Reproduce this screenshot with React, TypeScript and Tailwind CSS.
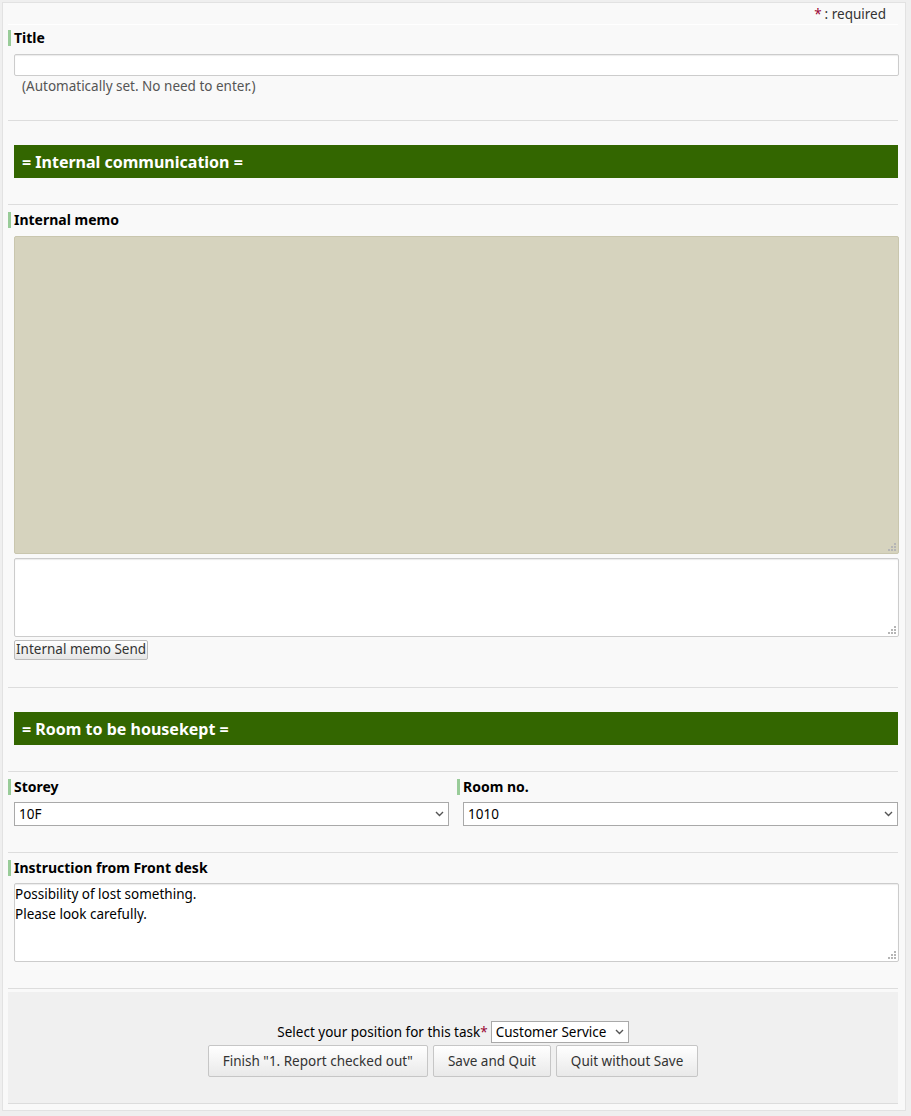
import React from 'react';

const font = { fontFamily: '"Noto Sans", "Liberation Sans", Arial, sans-serif' };

function Label({ children }: { children: React.ReactNode }) {
  return (
    <div className="flex h-[16px] items-center border-l-[3px] border-[#99cc99] pl-[3px] text-[14px] leading-[16px] font-bold text-black">
      {children}
    </div>
  );
}

function Hr() {
  return <div className="h-px bg-[#dddddd]" />;
}

function SectionHead({ children }: { children: React.ReactNode }) {
  return (
    <div className="ml-[6px] flex h-[33px] items-center bg-[#336600] pl-[8px] text-[16px] leading-[20px] font-bold text-white">
      {children}
    </div>
  );
}

function Chevron() {
  return (
    <svg width="9" height="6" viewBox="0 0 9 6" className="pointer-events-none absolute right-[5px] top-1/2 -translate-y-1/2">
      <path d="M1 1 L4.5 4.5 L8 1" fill="none" stroke="#555" strokeWidth="1.4" />
    </svg>
  );
}

// dotted resize grip like the original page's textareas
function Grip() {
  return (
    <svg width="8" height="8" viewBox="0 0 8 8" className="pointer-events-none absolute bottom-[3px] right-[3px]">
      <rect x="6" y="0" width="2" height="2" fill="#b5b5b5" />
      <rect x="3" y="3" width="2" height="2" fill="#b5b5b5" />
      <rect x="6" y="3" width="2" height="2" fill="#b5b5b5" />
      <rect x="0" y="6" width="2" height="2" fill="#b5b5b5" />
      <rect x="3" y="6" width="2" height="2" fill="#b5b5b5" />
      <rect x="6" y="6" width="2" height="2" fill="#b5b5b5" />
    </svg>
  );
}

function Area({ className, area, value }: { className: string; area: string; value?: string }) {
  return (
    <div className={`relative ml-[6px] w-[885px] ${className}`}>
      <textarea
        defaultValue={value}
        className={`block h-full w-full resize-none rounded-[2px] border px-0 py-0 text-[13.5px] leading-[20px] text-black ${area}`}
      />
      <Grip />
    </div>
  );
}

function Select({ value, className }: { value: string; className: string }) {
  return (
    <div className={`relative ${className}`}>
      <select
        defaultValue={value}
        className="h-full w-full appearance-none border border-[#a9a9a9] bg-white pl-[4px] text-[13.5px] leading-[16px] text-black outline-none"
      >
        <option>{value}</option>
      </select>
      <Chevron />
    </div>
  );
}

const btn =
  'h-[32px] rounded-[2px] border border-[#c6c6c6] bg-gradient-to-b from-[#ffffff] to-[#e9e9e9] px-[14px] text-[13.5px] leading-[16px] text-[#333]';

const whiteArea = 'border-[#cccccc] bg-white shadow-[inset_0_1px_1px_rgba(0,0,0,0.08)]';

export default function App() {
  return (
    <div className="min-h-screen bg-[#efefef] pb-[4px] pl-[2px] pr-[5px] pt-[2px] leading-[16px]" style={font}>
      <div className="border border-[#e2e2e2] bg-[#f9f9f9] pb-[6px] pl-[5px] pr-[7px]">
        <div className="flex h-[22px] items-center justify-end border-b border-white pr-[12px] text-[13.5px] text-[#333]">
          <span className="mr-[3px] text-[#990033]">*</span>: required
        </div>

        <div className="pt-[5px]">
          <Label>Title</Label>
          <input className="ml-[6px] mt-[8px] block h-[22px] w-[885px] rounded-[2px] border border-[#cccccc] bg-white shadow-[inset_0_1px_1px_rgba(0,0,0,0.08)]" />
          <div className="ml-[14px] mt-[2px] text-[13.5px] leading-[16px] text-[#555]">(Automatically set. No need to enter.)</div>
        </div>
        <div className="h-[26px]" />
        <Hr />

        <div className="pb-[26px] pt-[24px]">
          <SectionHead>= Internal communication =</SectionHead>
        </div>
        <Hr />

        <div className="pt-[7px]">
          <Label>Internal memo</Label>
          <Area className="mt-[8px] h-[318px]" area="border-[#c9c6ae] bg-[#d6d3be]" />
          <Area className="mt-[4px] h-[79px]" area={whiteArea} />
          <button className="ml-[6px] mt-[3px] block h-[20px] rounded-[2px] border border-[#bbbbbb] bg-gradient-to-b from-[#ffffff] to-[#e6e6e6] px-[1px] text-[13.5px] leading-none text-[#333]">
            Internal memo Send
          </button>
        </div>
        <div className="h-[27px]" />
        <Hr />

        <div className="pb-[26px] pt-[24px]">
          <SectionHead>= Room to be housekept =</SectionHead>
        </div>
        <Hr />

        <div className="flex pt-[7px]">
          <div className="w-[450px]">
            <Label>Storey</Label>
            <Select value="10F" className="ml-[6px] mt-[7px] h-[24px] w-[435px]" />
          </div>
          <div className="flex-1">
            <Label>Room no.</Label>
            <Select value="1010" className="ml-[6px] mt-[7px] h-[24px] w-[435px]" />
          </div>
        </div>
        <div className="h-[26px]" />
        <Hr />

        <div className="pt-[7px]">
          <Label>Instruction from Front desk</Label>
          <Area
            className="mt-[7px] h-[79px]"
            area={whiteArea}
            value={'Possibility of lost something.\nPlease look carefully.'}
          />
        </div>
        <div className="h-[26px]" />
        <Hr />

        <div className="mt-[3px] flex h-[112px] flex-col items-center justify-center border-b border-[#dcdcdc] bg-[#f0f0f0] pt-[3px]">
          <div className="flex items-center text-[13.5px] text-black">
            Select your position for this task<span className="text-[#990033]">*</span>
            <Select value="Customer Service" className="ml-[3px] h-[22px] w-[138px]" />
          </div>
          <div className="mt-[2px] flex gap-[5px]">
            <button className={btn}>Finish "1. Report checked out"</button>
            <button className={btn}>Save and Quit</button>
            <button className={btn}>Quit without Save</button>
          </div>
        </div>
      </div>
    </div>
  );
}
